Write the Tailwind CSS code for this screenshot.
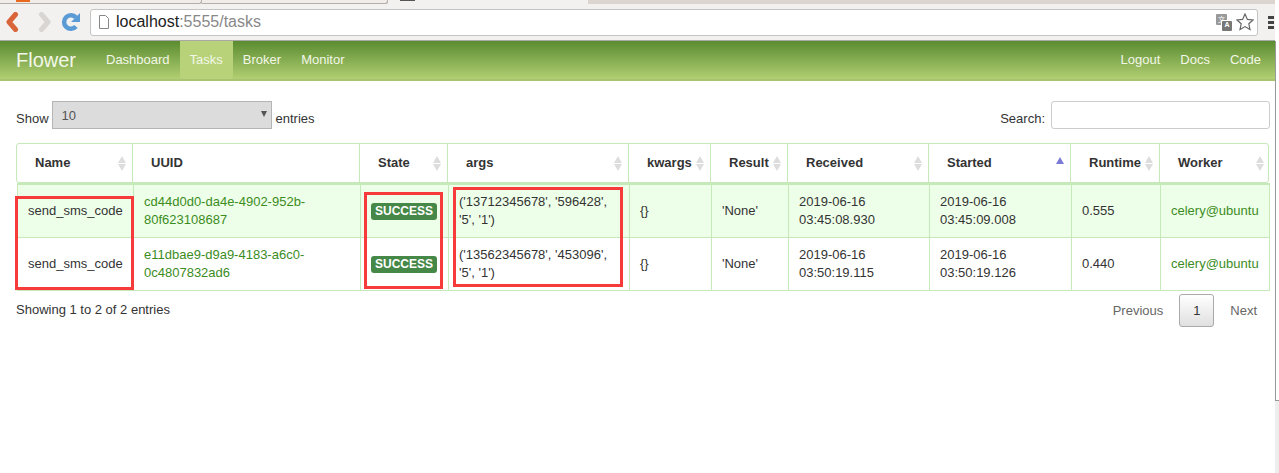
<!doctype html>
<html lang="en">
  <head>
    <script src="https://cdn.jsdelivr.net/npm/@tailwindcss/browser@4"></script>
    <meta charset="UTF-8" />
    <title>Flower</title>
  </head>
  <body class="bg-white font-['Liberation_Sans',Arial,sans-serif] text-[13px] text-[#333]">
    <div class="relative h-[473px] w-[1279px] overflow-hidden">
      <!-- browser chrome -->
      <div class="flex h-[4px] w-[1275px] bg-[#dcd5cf]">
        <div class="h-[4px] w-[202px] rounded-br-[3px] border-r border-b border-[#b5b0aa] bg-[#efecea] pl-[16px]"><div class="h-[2px] w-[14px] bg-[#e8681d]"></div></div>
        <div class="h-[4px] w-[186px] rounded-br-[3px] border-r border-b border-[#b5b0aa] bg-[#efecea]"></div>
        <div class="h-[4px] w-[200px] bg-[#f2f1f0] pl-[12px]"><div class="h-[1px] w-[15px] bg-[#555]"></div></div>
      </div>
      <div class="flex h-[37px] w-[1275px] items-center border-b border-[#a8a8a8] bg-[#f2f1f0]">
        <svg class="ml-[5px] h-[20px] w-[14px]" viewBox="0 0 14 20"><path d="M10.500 2.500 4 10l6.500 7.500" fill="none" stroke="#d9643a" stroke-width="5" stroke-linecap="round" stroke-linejoin="round" /></svg>
        <svg class="ml-[19px] h-[20px] w-[14px]" viewBox="0 0 14 20"><path d="m3.500 2.500 6.500 7.500-6.500 7.500" fill="none" stroke="#d8d5d2" stroke-width="5" stroke-linecap="round" stroke-linejoin="round" /></svg>
        <svg class="ml-[9px] h-[20px] w-[20px]" viewBox="0 0 20 20"><path d="M15 14.500a6.800 6.800 0 1 1 0-9" fill="none" stroke="#5b9bd5" stroke-width="4.500" /><path d="M19 1v9h-9z" fill="#5b9bd5" /></svg>
        <div class="ml-[9px] flex h-[27px] w-[1168px] items-center rounded-[3px] border border-[#c4c4c4] bg-white">
          <svg class="ml-[7px] h-[14px] w-[12px]" viewBox="0 0 12 14"><path d="M1.500.5h6l3 3v10h-9z" fill="#fff" stroke="#888" /></svg>
          <span class="ml-[6px] text-[16px] text-[#222]">localhost<span class="text-[#888]">:5555/tasks</span></span>
          <div class="ml-auto flex items-center">
            <div class="relative h-[17px] w-[16px]">
              <span class="absolute top-0 left-0 flex h-[11px] w-[11px] items-center justify-center rounded-[1px] bg-[#999] font-['Noto_Sans_CJK_SC',sans-serif] text-[7px] leading-none text-white">文</span>
              <span class="absolute right-0 bottom-0 flex h-[10px] w-[10px] items-center justify-center rounded-[1px] bg-[#777] text-[7px] font-bold text-white ring-1 ring-white">A</span>
            </div>
            <svg class="mr-[3px] ml-[4px] h-[18px] w-[18px]" viewBox="0 0 18 18"><path d="m9 1 2.400 5.400 5.600.6-4.200 3.800 1.200 5.700L9 13.600 4 16.500l1.200-5.700L1 7l5.600-.6z" fill="#fff" stroke="#666" stroke-width="1.200" /></svg>
          </div>
        </div>
        <div class="ml-[10px] flex flex-col gap-[2px]">
          <span class="h-[3px] w-[6px] bg-[#444]"></span>
          <span class="h-[3px] w-[6px] bg-[#444]"></span>
          <span class="h-[3px] w-[6px] bg-[#444]"></span>
        </div>
      </div>

      <!-- navbar -->
      <nav class="flex h-[40px] w-[1275px] items-stretch border-b-2 border-[#a8c46e] bg-gradient-to-b from-[#5b8c30] to-[#b2cf73] text-[13px] text-[#f2f7e8]">
        <a class="ml-[16px] flex w-[90px] items-center text-[20px]">Flower</a>
        <a class="flex items-center pr-[10px]">Dashboard</a>
        <a class="flex items-center bg-[#b8d27a] px-[10px]">Tasks</a>
        <a class="flex items-center px-[10px]">Broker</a>
        <a class="flex items-center px-[10px]">Monitor</a>
        <div class="mr-[14px] ml-auto flex items-center gap-[20px]">
          <a>Logout</a>
          <a>Docs</a>
          <a>Code</a>
        </div>
      </nav>

      <!-- filter row -->
      <div class="mt-[20px] flex h-[28px] items-center pr-[9px] pl-[16px]">
        <span class="mt-[7px]">Show</span>
        <div class="relative ml-[3px] flex h-[28px] w-[220px] items-center border border-[#b5b5b5] bg-[#dcdcdc] pt-[1px] pl-[9px] text-[#555]">
          10
          <span class="absolute top-[9px] right-[4px] h-0 w-0 border-x-[3px] border-t-[6px] border-x-transparent border-t-[#555]"></span>
        </div>
        <span class="mt-[7px] ml-[4px]">entries</span>
        <span class="mt-[7px] ml-auto">Search:</span>
        <div class="ml-[6px] h-[28px] w-[219px] rounded-[3px] border border-[#ccc] bg-white"></div>
      </div>

      <!-- header -->
      <div class="mt-[14px] ml-[16px] grid h-[40px] w-[1253px] grid-cols-[116px_227px_88px_181px_82px_77px_141px_142px_89px_110px] rounded-[3px] border border-[#c6e9b9] font-bold">
        <div class="relative flex items-center border-r border-[#c6e9b9] pb-[1px] pl-[18px]">Name<span class="absolute top-[12px] right-[6px] flex flex-col gap-[1px]"><span class="h-0 w-0 border-x-[4px] border-b-[7px] border-x-transparent border-b-[#ddd]"></span><span class="h-0 w-0 border-x-[4px] border-t-[7px] border-x-transparent border-t-[#ddd]"></span></span></div>
        <div class="relative flex items-center border-r border-[#c6e9b9] pb-[1px] pl-[18px]">UUID</div>
        <div class="relative flex items-center border-r border-[#c6e9b9] pb-[1px] pl-[18px]">State<span class="absolute top-[12px] right-[6px] flex flex-col gap-[1px]"><span class="h-0 w-0 border-x-[4px] border-b-[7px] border-x-transparent border-b-[#ddd]"></span><span class="h-0 w-0 border-x-[4px] border-t-[7px] border-x-transparent border-t-[#ddd]"></span></span></div>
        <div class="relative flex items-center border-r border-[#c6e9b9] pb-[1px] pl-[18px]">args<span class="absolute top-[12px] right-[6px] flex flex-col gap-[1px]"><span class="h-0 w-0 border-x-[4px] border-b-[7px] border-x-transparent border-b-[#ddd]"></span><span class="h-0 w-0 border-x-[4px] border-t-[7px] border-x-transparent border-t-[#ddd]"></span></span></div>
        <div class="relative flex items-center border-r border-[#c6e9b9] pb-[1px] pl-[18px]">kwargs<span class="absolute top-[12px] right-[6px] flex flex-col gap-[1px]"><span class="h-0 w-0 border-x-[4px] border-b-[7px] border-x-transparent border-b-[#ddd]"></span><span class="h-0 w-0 border-x-[4px] border-t-[7px] border-x-transparent border-t-[#ddd]"></span></span></div>
        <div class="relative flex items-center border-r border-[#c6e9b9] pb-[1px] pl-[18px]">Result<span class="absolute top-[12px] right-[6px] flex flex-col gap-[1px]"><span class="h-0 w-0 border-x-[4px] border-b-[7px] border-x-transparent border-b-[#ddd]"></span><span class="h-0 w-0 border-x-[4px] border-t-[7px] border-x-transparent border-t-[#ddd]"></span></span></div>
        <div class="relative flex items-center border-r border-[#c6e9b9] pb-[1px] pl-[18px]">Received<span class="absolute top-[12px] right-[6px] flex flex-col gap-[1px]"><span class="h-0 w-0 border-x-[4px] border-b-[7px] border-x-transparent border-b-[#ddd]"></span><span class="h-0 w-0 border-x-[4px] border-t-[7px] border-x-transparent border-t-[#ddd]"></span></span></div>
        <div class="relative flex items-center border-r border-[#c6e9b9] pb-[1px] pl-[18px]">Started<span class="absolute top-[13px] right-[6px] h-0 w-0 border-x-[4px] border-b-[7px] border-x-transparent border-b-[#7b7bd6]"></span></div>
        <div class="relative flex items-center border-r border-[#c6e9b9] pb-[1px] pl-[18px]">Runtime<span class="absolute top-[12px] right-[6px] flex flex-col gap-[1px]"><span class="h-0 w-0 border-x-[4px] border-b-[7px] border-x-transparent border-b-[#ddd]"></span><span class="h-0 w-0 border-x-[4px] border-t-[7px] border-x-transparent border-t-[#ddd]"></span></span></div>
        <div class="relative flex items-center pb-[1px] pl-[18px]">Worker<span class="absolute top-[12px] right-[6px] flex flex-col gap-[1px]"><span class="h-0 w-0 border-x-[4px] border-b-[7px] border-x-transparent border-b-[#ddd]"></span><span class="h-0 w-0 border-x-[4px] border-t-[7px] border-x-transparent border-t-[#ddd]"></span></span></div>
      </div>

      <!-- rows -->
      <div class="relative ml-[17px] w-[1253px] border-t-2 border-[#c6e9b9] leading-[18px]">
        <div class="grid h-[53px] grid-cols-[116px_227px_88px_181px_82px_77px_141px_142px_89px_108px] border-x border-b border-[#c6e9b9] bg-[#eeffe9]">
          <div class="flex items-center border-r border-[#c6e9b9] pl-[10px]">send_sms_code</div>
          <div class="flex items-center border-r border-[#c6e9b9] pl-[10px] text-[#3c8c1e]">cd44d0d0-da4e-4902-952b-<br />80f623108687</div>
          <div class="flex items-center border-r border-[#c6e9b9] pl-[10px]"><span class="rounded-[3px] bg-[#468847] px-[4px] text-[12px] leading-[17px] font-bold text-white">SUCCESS</span></div>
          <div class="flex items-center border-r border-[#c6e9b9] pl-[10px]">('13712345678', '596428',<br />'5', '1')</div>
          <div class="flex items-center border-r border-[#c6e9b9] pl-[10px]">{}</div>
          <div class="flex items-center border-r border-[#c6e9b9] pl-[10px]">'None'</div>
          <div class="flex items-center border-r border-[#c6e9b9] pl-[10px]">2019-06-16<br />03:45:08.930</div>
          <div class="flex items-center border-r border-[#c6e9b9] pl-[10px]">2019-06-16<br />03:45:09.008</div>
          <div class="flex items-center border-r border-[#c6e9b9] pl-[10px]">0.555</div>
          <div class="flex items-center pl-[10px] text-[#3c8c1e]">celery@ubuntu</div>
        </div>
        <div class="grid h-[53px] grid-cols-[116px_227px_88px_181px_82px_77px_141px_142px_89px_108px] border-x border-b border-[#c6e9b9] bg-white">
          <div class="flex items-center border-r border-[#c6e9b9] pl-[10px]">send_sms_code</div>
          <div class="flex items-center border-r border-[#c6e9b9] pl-[10px] text-[#3c8c1e]">e11dbae9-d9a9-4183-a6c0-<br />0c4807832ad6</div>
          <div class="flex items-center border-r border-[#c6e9b9] pl-[10px]"><span class="rounded-[3px] bg-[#468847] px-[4px] text-[12px] leading-[17px] font-bold text-white">SUCCESS</span></div>
          <div class="flex items-center border-r border-[#c6e9b9] pl-[10px]">('13562345678', '453096',<br />'5', '1')</div>
          <div class="flex items-center border-r border-[#c6e9b9] pl-[10px]">{}</div>
          <div class="flex items-center border-r border-[#c6e9b9] pl-[10px]">'None'</div>
          <div class="flex items-center border-r border-[#c6e9b9] pl-[10px]">2019-06-16<br />03:50:19.115</div>
          <div class="flex items-center border-r border-[#c6e9b9] pl-[10px]">2019-06-16<br />03:50:19.126</div>
          <div class="flex items-center border-r border-[#c6e9b9] pl-[10px]">0.440</div>
          <div class="flex items-center pl-[10px] text-[#3c8c1e]">celery@ubuntu</div>
        </div>
        <!-- red annotation boxes -->
        <div class="absolute top-[11px] left-[-2px] h-[94px] w-[119px] border-[3px] border-[#f73a3a]"></div>
        <div class="absolute top-[7px] left-[347px] h-[97px] w-[79px] border-[3px] border-[#f73a3a]"></div>
        <div class="absolute top-[2px] left-[436px] h-[100px] w-[170px] border-[3px] border-[#f73a3a]"></div>
      </div>

      <!-- footer -->
      <div class="mt-[3px] flex w-[1275px] items-start pr-[18px] pl-[16px]">
        <span class="mt-[6px]">Showing 1 to 2 of 2 entries</span>
        <div class="ml-auto flex items-center text-[#666]">
          <span>Previous</span>
          <span class="mx-[16px] flex h-[33px] w-[35px] items-center justify-center rounded-[3px] border border-[#aaa] bg-gradient-to-b from-white to-[#e0e0e0] text-[#333]">1</span>
          <span>Next</span>
        </div>
      </div>

      <!-- window scrollbar -->
      <div class="absolute top-[41px] right-0 h-[360px] w-[4px] border-b border-l border-[#999] bg-white"></div>
      <div class="absolute top-[401px] right-0 bottom-0 w-[4px] bg-[#eee]"></div>
    </div>
  </body>
</html>
